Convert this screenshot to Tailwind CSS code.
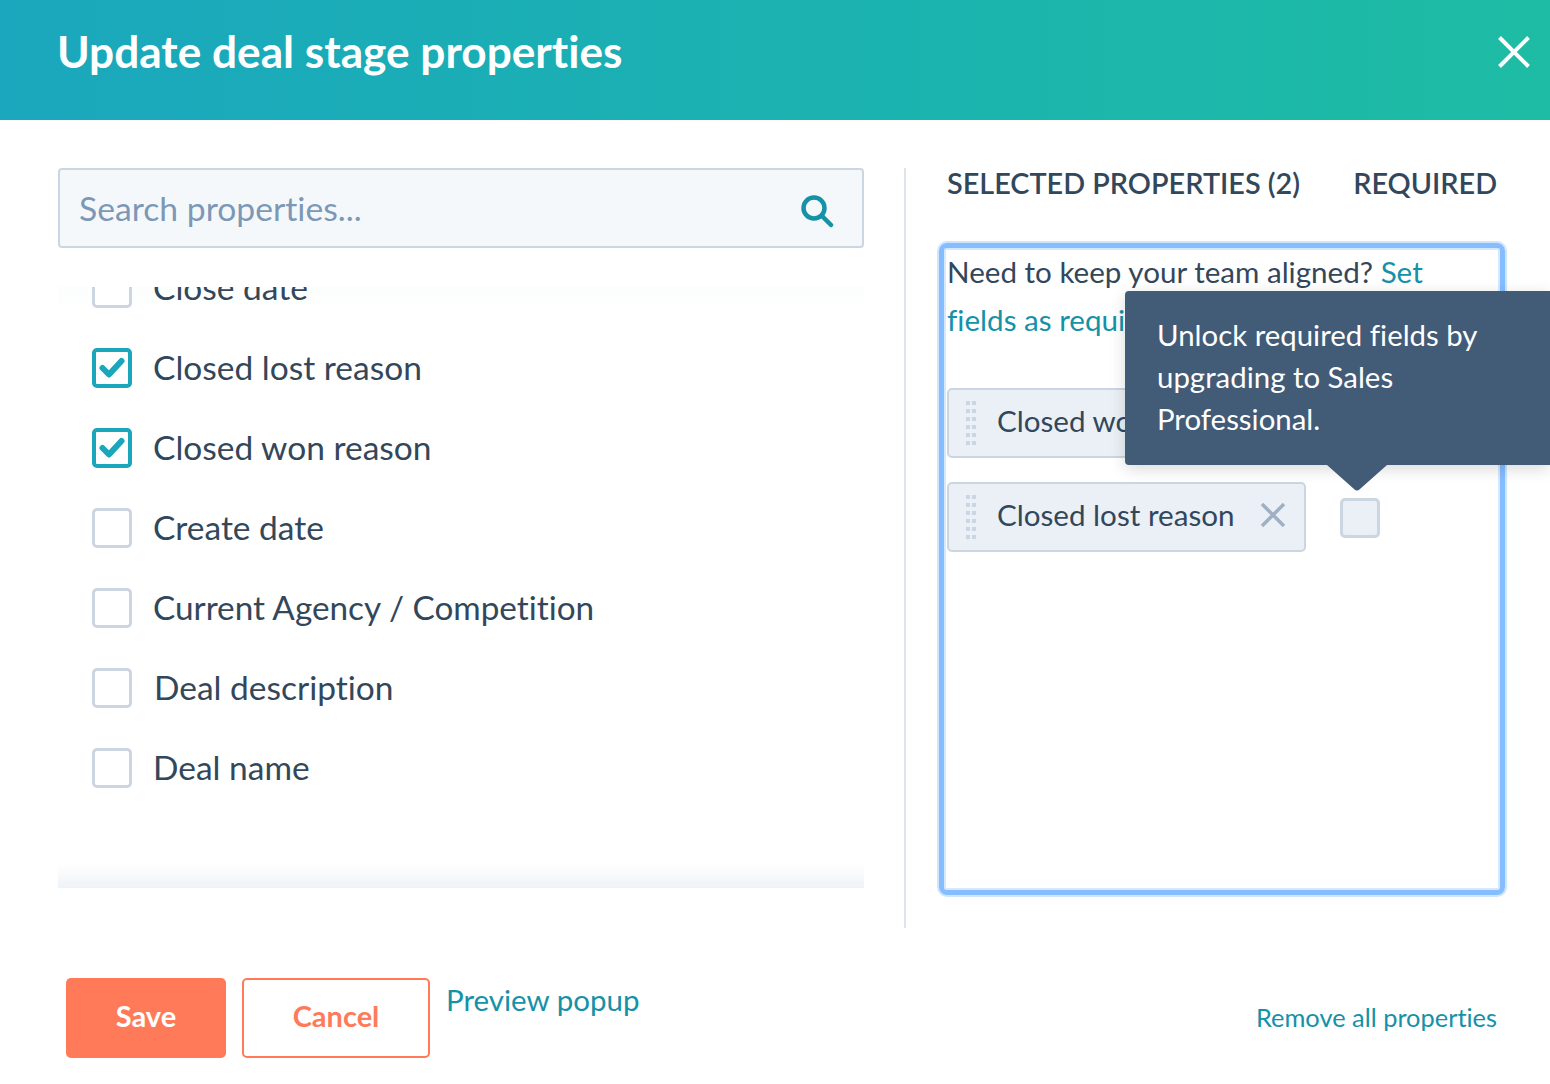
<!DOCTYPE html>
<html lang="en">
<head>
    <meta charset="UTF-8">
    <meta name="viewport" content="width=device-width, initial-scale=1.0">
    <title>Update deal stage properties</title>
    <script src="https://cdn.jsdelivr.net/npm/@tailwindcss/browser@4"></script>
</head>
<body class="w-[1550px] h-[1084px] overflow-hidden bg-white text-[#33475b] font-['Lato',sans-serif] [font-variant-ligatures:none]">
    <!-- header -->
    <header class="h-[120px] pl-[57px] pr-[20px] flex items-center justify-between bg-linear-to-r from-[#1ba7bd] to-[#1ebca4]">
        <h1 class="text-[44.2px] font-bold text-white -mt-[18px]">Update deal stage properties</h1>
        <svg class="w-[32px] h-[32px] -mt-[17px]" viewBox="0 0 32 32" fill="none" stroke="white" stroke-width="4">
            <path d="M1.5 1.5 L30.5 30.5 M30.5 1.5 L1.5 30.5"/>
        </svg>
    </header>

    <main class="flex pl-[58px] pt-[48px]">
        <!-- left column -->
        <section class="w-[806px]">
            <div class="h-[80px] pl-[19px] pr-[28px] flex items-center justify-between bg-[#f5f8fa] border-2 border-[#cbd6e2] rounded-[4px]">
                <span class="text-[33.7px] text-[#7c98b6]">Search properties...</span>
                <svg class="w-[34px] h-[34px] mt-[5px]" viewBox="0 0 34 34" fill="none" stroke="#1591a8" stroke-width="4.5" stroke-linecap="round">
                    <circle cx="14" cy="14" r="10.5"/>
                    <path d="M22 22 L31 31"/>
                </svg>
            </div>
            <div class="relative h-[601px] mt-[39px] overflow-hidden">
                <!-- faint top fade -->
                <div class="absolute left-0 right-0 top-0 h-[26px] bg-linear-to-b from-[#fcfdfd] to-white"></div>
                <ul class="relative -mt-[39px] pl-[34px] text-[33.5px]">
                    <li class="h-[80px] flex items-center gap-[21px]">
                        <span class="w-[40px] h-[40px] bg-white border-[3px] border-[#cbd6e2] rounded-[5px]"></span>
                        <span class="-mt-[1px]">Close date</span>
                    </li>
                    <li class="h-[80px] flex items-center gap-[21px]">
                        <span class="w-[40px] h-[40px] flex items-center justify-center bg-white border-[4px] border-[#1ca6bc] rounded-[5px]">
                            <svg class="w-[26px] h-[22px]" viewBox="0 0 26 22" fill="none" stroke="#1ca6bc" stroke-width="6" stroke-linecap="round" stroke-linejoin="round"><path d="M3.5 11 L10 17.5 L22.5 4"/></svg>
                        </span>
                        <span class="-mt-[1px]">Closed lost reason</span>
                    </li>
                    <li class="h-[80px] flex items-center gap-[21px]">
                        <span class="w-[40px] h-[40px] flex items-center justify-center bg-white border-[4px] border-[#1ca6bc] rounded-[5px]">
                            <svg class="w-[26px] h-[22px]" viewBox="0 0 26 22" fill="none" stroke="#1ca6bc" stroke-width="6" stroke-linecap="round" stroke-linejoin="round"><path d="M3.5 11 L10 17.5 L22.5 4"/></svg>
                        </span>
                        <span class="-mt-[1px]">Closed won reason</span>
                    </li>
                    <li class="h-[80px] flex items-center gap-[21px]">
                        <span class="w-[40px] h-[40px] bg-white border-[3px] border-[#cbd6e2] rounded-[5px]"></span>
                        <span class="-mt-[1px]">Create date</span>
                    </li>
                    <li class="h-[80px] flex items-center gap-[21px]">
                        <span class="w-[40px] h-[40px] bg-white border-[3px] border-[#cbd6e2] rounded-[5px]"></span>
                        <span class="-mt-[1px] text-[33.3px]">Current Agency / Competition</span>
                    </li>
                    <li class="h-[80px] flex items-center gap-[22px]">
                        <span class="w-[40px] h-[40px] bg-white border-[3px] border-[#cbd6e2] rounded-[5px]"></span>
                        <span class="-mt-[1px]">Deal description</span>
                    </li>
                    <li class="h-[80px] flex items-center gap-[21px]">
                        <span class="w-[40px] h-[40px] bg-white border-[3px] border-[#cbd6e2] rounded-[5px]"></span>
                        <span class="-mt-[1px]">Deal name</span>
                    </li>
                </ul>
                <!-- scroll fade -->
                <div class="absolute left-0 right-0 bottom-0 h-[24px] bg-linear-to-b from-white to-[#eef2f6]"></div>
            </div>
        </section>

        <!-- divider -->
        <div class="w-[2px] h-[760px] ml-[40px] bg-[#dfe3eb]"></div>

        <!-- right column -->
        <section class="w-[566px] ml-[33px]">
            <div class="h-[32px] pl-[8px] flex items-center text-[28.8px] font-semibold leading-none whitespace-nowrap">
                <span class="-mt-[2px]">SELECTED PROPERTIES (2)</span>
                <span class="ml-[53px] -mt-[2px]">REQUIRED</span>
            </div>
            <div class="relative h-[652px] mt-[43px] pl-[3px] border-[5px] border-[#85bdff] rounded-[8px] shadow-[0_0_0_2px_#cfe4ff,inset_0_0_0_2px_#d6e8ff]">
                <p class="w-[520px] text-[29.6px] leading-[48px]">Need to keep your team aligned? <span class="text-[#1591a8]">Set fields as required</span></p>
                <div class="mt-[44px] w-[359px] h-[70px] pl-[17px] flex items-center bg-[#eaf0f6] border-2 border-[#cbd6e2] rounded-[5px]">
                    <svg class="w-[10px] h-[44px] shrink-0" viewBox="0 0 10 44" fill="#cbd6e2">
                        <defs><pattern id="dots" width="6" height="8" patternUnits="userSpaceOnUse"><rect width="4" height="4"/></pattern></defs>
                        <rect width="10" height="44" fill="url(#dots)"/>
                    </svg>
                    <span class="ml-[21px] -mt-[3px] text-[29.6px] whitespace-nowrap">Closed won reason</span>
                </div>
                <div class="mt-[24px] flex items-center">
                    <div class="w-[359px] h-[70px] pl-[17px] pr-[18px] flex items-center justify-between bg-[#eaf0f6] border-2 border-[#cbd6e2] rounded-[5px]">
                        <svg class="w-[10px] h-[44px] shrink-0" viewBox="0 0 10 44" fill="#cbd6e2">
                            <rect width="10" height="44" fill="url(#dots)"/>
                        </svg>
                        <span class="ml-[21px] -mt-[3px] mr-auto text-[29.6px] whitespace-nowrap">Closed lost reason</span>
                        <svg class="w-[26px] h-[26px] -mt-[4px]" viewBox="0 0 26 26" fill="none" stroke="#9fb0c4" stroke-width="3.5">
                            <path d="M2 2 L24 24 M24 2 L2 24"/>
                        </svg>
                    </div>
                    <span class="w-[40px] h-[40px] ml-[34px] mt-[2px] bg-[#eaf0f6] border-[3px] border-[#cbd6e2] rounded-[5px]"></span>
                </div>

                <!-- tooltip -->
                <div class="absolute left-[181px] top-[43px] w-[425px] h-[174px] pl-[32px] pt-[23px] bg-[#425b76] rounded-l-[4px] shadow-[0_4px_16px_rgba(0,0,0,0.15)] text-white text-[29.4px] leading-[42px]">
                    <p>Unlock required fields by<br>upgrading to Sales<br>Professional.</p>
                    <svg class="absolute left-[202px] top-[174px] w-[60px] h-[26px]" viewBox="0 0 60 26" fill="#425b76">
                        <path d="M0 0 H60 L33 24 Q30 27 27 24 Z"/>
                    </svg>
                </div>
            </div>
        </section>
    </main>

    <!-- footer -->
    <footer class="flex items-start pl-[66px] pr-[53px] mt-[50px]">
        <button class="w-[160px] h-[80px] pb-[5px] bg-[#ff7a59] rounded-[5px] text-white text-[29px] font-bold">Save</button>
        <button class="w-[188px] h-[80px] pb-[5px] ml-[16px] border-2 border-[#ff7a59] rounded-[5px] text-[#ff7a59] text-[29px] font-bold">Cancel</button>
        <a class="ml-[16px] text-[29.5px] text-[#1591a8]">Preview popup</a>
        <a class="ml-auto mt-[20px] text-[25.4px] text-[#1591a8]">Remove all properties</a>
    </footer>
</body>
</html>
